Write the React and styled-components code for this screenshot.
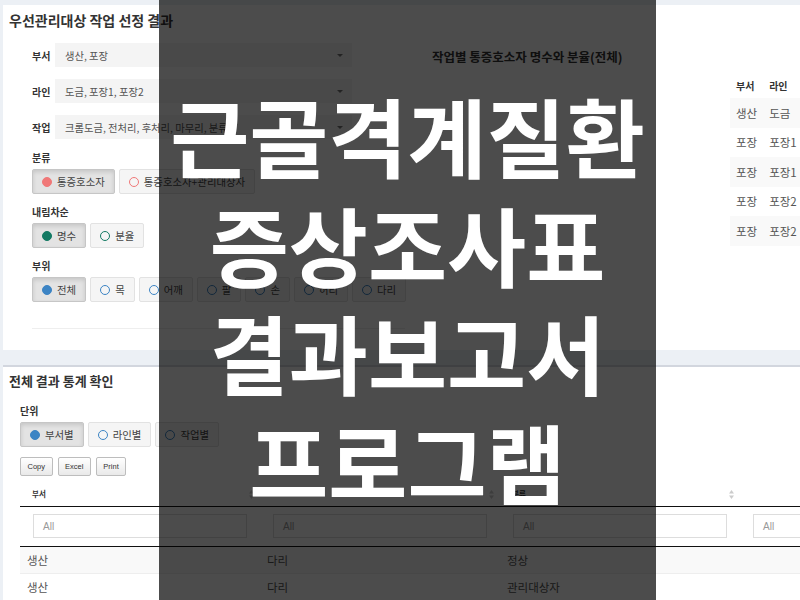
import React from 'react';
import styled, { createGlobalStyle } from 'styled-components';

const GlobalStyle = createGlobalStyle`
  html, body {
    margin: 0;
    padding: 0;
  }
  body {
    background: #ecf0f5;
    font-family: "Noto Sans CJK KR", "Noto Sans", sans-serif;
    color: #333;
    overflow: hidden;
  }
`;

const Page = styled.div`
  position: relative;
  width: 800px;
  height: 600px;
  overflow: hidden;
  padding: 5px 0 0 3px;
  box-sizing: border-box;
`;

const Box = styled.section`
  background: #fff;
  width: 960px;
  height: ${p => p.$height || 'auto'};
  box-sizing: border-box;
  border-top: ${p => (p.$bordered ? '2px solid #d2d6de' : 'none')};
  margin-bottom: 15px;
`;

const BoxTitle = styled.h3`
  margin: 0;
  padding: ${p => p.$pad || '6px 6px'};
  font-size: ${p => p.$size || '14px'};
  line-height: 18px;
  font-weight: 700;
  color: #333;
`;

const BoxBody = styled.div`
  display: flex;
  padding-top: 8px;
`;

const FormCol = styled.div`
  width: 402px;
  padding-left: 29px;
  box-sizing: border-box;
`;

const SelectRow = styled.div`
  display: flex;
  align-items: center;
  height: 24px;
  margin-bottom: 12px;
`;

const SelectLabel = styled.span`
  width: 23px;
  font-size: 10px;
  font-weight: 700;
  color: #333;
`;

const Select = styled.div`
  width: 297px;
  height: 24px;
  background: #f4f4f4;
  display: flex;
  align-items: center;
  justify-content: space-between;
  padding: 0 9px 0 10px;
  box-sizing: border-box;
  font-size: 10.3px;
  color: #555;
  white-space: nowrap;
`;

const Caret = styled.span`
  width: 0;
  height: 0;
  border-left: 3px solid transparent;
  border-right: 3px solid transparent;
  border-top: 3px solid #777;
`;

const Field = styled.div`
  margin-top: ${p => p.$top || '11px'};
`;

const FieldLabel = styled.div`
  font-size: 10px;
  line-height: 14px;
  font-weight: 700;
  color: #333;
  margin-bottom: 4px;
`;

const Group = styled.div`
  display: flex;
  gap: 4px;
`;

const Btn = styled.div`
  height: 25px;
  box-sizing: border-box;
  display: flex;
  align-items: center;
  gap: 5px;
  padding: 0 9px;
  font-size: 10.4px;
  color: #444;
  white-space: nowrap;
  border-radius: 2px;
  border: 1px solid ${p => (p.$active ? '#c6c6c6' : '#e2e2e2')};
  background: ${p => (p.$active ? '#e3e3e3' : '#f5f5f5')};
  box-shadow: ${p => (p.$active ? 'inset 0 2px 4px rgba(0,0,0,0.13)' : 'none')};
`;

const Dot = styled.span`
  width: 10px;
  height: 10px;
  box-sizing: border-box;
  border-radius: 50%;
  border: 1px solid ${p => p.$color};
  background: ${p => (p.$on ? p.$color : 'transparent')};
  flex-shrink: 0;
`;

const Rule = styled.div`
  margin-top: 26px;
  width: 373px;
  border-top: 1px solid #eee;
`;

const ChartCol = styled.div`
  width: 325px;
  padding-left: 27px;
  box-sizing: border-box;
`;

const ChartTitle = styled.div`
  margin-top: 6px;
  font-size: 12.5px;
  line-height: 16px;
  font-weight: 700;
  color: #333;
  white-space: nowrap;
`;

const SideTable = styled.table`
  margin-top: 29px;
  border-collapse: collapse;
  white-space: nowrap;
`;

const SideHead = styled.th`
  height: 26px;
  padding: 0 6px;
  text-align: left;
  font-size: 10px;
  font-weight: 700;
  color: #333;
`;

const SideRow = styled.tr`
  height: 29.5px;
  background: ${p => (p.$striped ? '#f9f9f9' : '#fff')};
`;

const SideCell = styled.td`
  padding: 0 6px;
  font-size: 11.5px;
  color: #555;
`;

const Box2Body = styled.div`
  padding: 0 0 0 17px;
`;

const ToolRow = styled.div`
  display: flex;
  gap: 5px;
  margin-top: 10px;
`;

const ToolBtn = styled.div`
  height: 19px;
  box-sizing: border-box;
  padding: 0 6.5px;
  display: flex;
  align-items: center;
  font-family: "Liberation Sans", Arial, sans-serif;
  font-size: 7.5px;
  color: #333;
  border: 1px solid #bdbdbd;
  border-radius: 2px;
  background: linear-gradient(#ffffff, #e9e9e9);
`;

const Grid = styled.div`
  display: grid;
  grid-template-columns: repeat(4, 240px);
`;

const HeadCell = styled.div`
  height: 31px;
  box-sizing: border-box;
  display: flex;
  align-items: flex-end;
  justify-content: space-between;
  padding: 0 6px 7px 12px;
  font-size: 7.5px;
  line-height: 10px;
  font-weight: 700;
  color: #333;
  border-bottom: 1px solid #111;
`;

const FilterCell = styled.div`
  height: 40px;
  box-sizing: border-box;
  padding: 7px 13px 8px;
  border-bottom: 1px solid #111;
`;

const FilterInput = styled.div`
  height: 24px;
  box-sizing: border-box;
  border: 1px solid #ddd;
  display: flex;
  align-items: center;
  padding-left: 9px;
  font-family: "Liberation Sans", Arial, sans-serif;
  font-size: 10px;
  color: #999;
`;

const DataCell = styled.div`
  height: 27px;
  box-sizing: border-box;
  display: flex;
  align-items: center;
  padding-left: 7px;
  font-size: 11.5px;
  color: #555;
  background: ${p => (p.$striped ? '#f9f9f9' : '#fff')};
  border-bottom: 1px solid #eee;
`;

const Overlay = styled.div`
  position: absolute;
  top: 0;
  left: 159px;
  width: 497px;
  height: 600px;
  background: rgba(0, 0, 0, 0.7);
  display: flex;
  flex-direction: column;
  align-items: center;
  padding-top: 81px;
  box-sizing: border-box;
`;

const Headline = styled.div`
  color: #fff;
  font-family: "Noto Sans CJK KR", "Noto Sans", sans-serif;
  font-size: 86px;
  line-height: 108.5px;
  font-weight: 700;
  white-space: nowrap;
`;

function SortIcon() {
  return (
    <svg width="5" height="9" viewBox="0 0 5 9">
      <path d="M2.5 0 L5 3.5 H0 Z" fill="#ccc" />
      <path d="M2.5 9 L5 5.5 H0 Z" fill="#ccc" />
    </svg>
  );
}

function RadioGroup({ options, active, color }) {
  return (
    <Group>
      {options.map(o => (
        <Btn key={o} $active={o === active}>
          <Dot $color={color} $on={o === active} />
          {o}
        </Btn>
      ))}
    </Group>
  );
}

const sideRows = [
  ['생산', '도금', '크롬도금'],
  ['포장', '포장1', '전처리'],
  ['포장', '포장1', '후처리'],
  ['포장', '포장2', '마무리'],
  ['포장', '포장2', '분류'],
];

const resultRows = [
  ['생산', '다리', '정상', ''],
  ['생산', '다리', '관리대상자', ''],
];

export default function App() {
  return (
    <>
      <GlobalStyle />
      <Page>
        <Box $height="345px">
          <BoxTitle>우선관리대상 작업 선정 결과</BoxTitle>
          <BoxBody>
            <FormCol>
              <SelectRow>
                <SelectLabel>부서</SelectLabel>
                <Select>생산, 포장<Caret /></Select>
              </SelectRow>
              <SelectRow>
                <SelectLabel>라인</SelectLabel>
                <Select>도금, 포장1, 포장2<Caret /></Select>
              </SelectRow>
              <SelectRow>
                <SelectLabel>작업</SelectLabel>
                <Select>크롬도금, 전처리, 후처리, 마무리, 분류<Caret /></Select>
              </SelectRow>

              <Field $top="0px">
                <FieldLabel>분류</FieldLabel>
                <RadioGroup options={['통증호소자', '통증호소자+관리대상자']} active="통증호소자" color="#f07878" />
              </Field>
              <Field>
                <FieldLabel>내림차순</FieldLabel>
                <RadioGroup options={['명수', '분율']} active="명수" color="#137a63" />
              </Field>
              <Field>
                <FieldLabel>부위</FieldLabel>
                <RadioGroup options={['전체', '목', '어깨', '팔', '손', '허리', '다리']} active="전체" color="#3c84c4" />
              </Field>
              <Rule />
            </FormCol>

            <ChartCol>
              <ChartTitle>작업별 통증호소자 명수와 분율(전체)</ChartTitle>
            </ChartCol>

            <div>
              <SideTable>
                <thead>
                  <tr>
                    <SideHead>부서</SideHead>
                    <SideHead>라인</SideHead>
                    <SideHead>작업</SideHead>
                  </tr>
                </thead>
                <tbody>
                  {sideRows.map((r, i) => (
                    <SideRow key={i} $striped={i % 2 === 0}>
                      {r.map((c, j) => <SideCell key={j}>{c}</SideCell>)}
                    </SideRow>
                  ))}
                </tbody>
              </SideTable>
            </div>
          </BoxBody>
        </Box>

        <Box $bordered>
          <BoxTitle $pad="5px 6px" $size="13px">전체 결과 통계 확인</BoxTitle>
          <Box2Body>
            <Field $top="9px">
              <FieldLabel>단위</FieldLabel>
              <RadioGroup options={['부서별', '라인별', '작업별']} active="부서별" color="#3c84c4" />
            </Field>
            <ToolRow>
              <ToolBtn>Copy</ToolBtn>
              <ToolBtn>Excel</ToolBtn>
              <ToolBtn>Print</ToolBtn>
            </ToolRow>
            <Grid>
              <HeadCell>부서<SortIcon /></HeadCell>
              <HeadCell><span /><SortIcon /></HeadCell>
              <HeadCell>분류<SortIcon /></HeadCell>
              <HeadCell />
              {[0, 1, 2, 3].map(i => (
                <FilterCell key={i}><FilterInput>All</FilterInput></FilterCell>
              ))}
              {resultRows.map((r, i) =>
                r.map((c, j) => (
                  <DataCell key={`${i}-${j}`} $striped={i % 2 === 0}>{c}</DataCell>
                ))
              )}
            </Grid>
          </Box2Body>
        </Box>

        <Overlay>
          <Headline>근골격계질환</Headline>
          <Headline>증상조사표</Headline>
          <Headline>결과보고서</Headline>
          <Headline>프로그램</Headline>
        </Overlay>
      </Page>
    </>
  );
}
